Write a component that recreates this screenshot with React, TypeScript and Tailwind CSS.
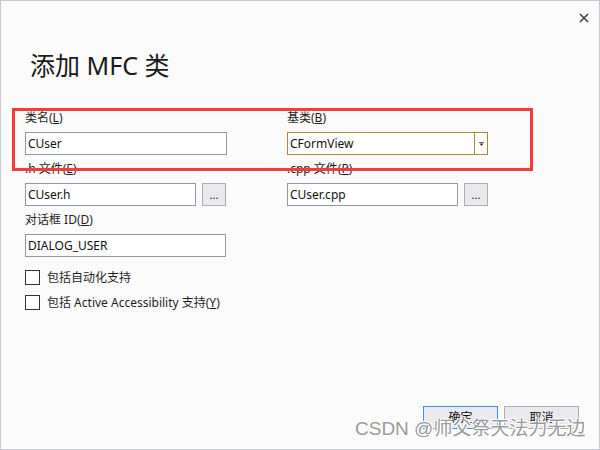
import React from 'react';

const font = { fontFamily: '"Noto Sans", "Noto Sans CJK SC", sans-serif' };

const Label = ({ children }: { children: React.ReactNode }) => (
  <div className="h-[16px] text-[12px] leading-[16px] text-[#1e1e1e]">{children}</div>
);

const TextBox = ({ value, w }: { value: string; w: string }) => (
  <div className={`${w} mt-[6px] h-[23px] border border-[#8e9aac] bg-white px-[2px] text-[12px] leading-[21px] text-[#111]`}>
    {value}
  </div>
);

const Browse = () => (
  <div className="mt-[6px] ml-[6px] flex h-[23px] w-[24px] items-center justify-center border border-[#adadad] bg-[#e9e9ee] text-[11px] leading-none text-[#111]">
    ...
  </div>
);

const Check = ({ children }: { children: React.ReactNode }) => (
  <div className="flex h-[25px] items-center gap-[7px]">
    <div className="h-[15px] w-[15px] border border-[#333] bg-white" />
    <span className="text-[12px] text-[#1e1e1e]">{children}</span>
  </div>
);

export default function App() {
  return (
    <div style={font} className="relative flex h-[450px] w-[600px] flex-col overflow-hidden border border-[#c9cad9] bg-[#fbfbfb]">
      <div className="flex h-[33px] items-center justify-end pr-[10px]">
        <svg width="10" height="10" viewBox="0 0 10 10">
          <path d="M1 1 L9 9 M9 1 L1 9" stroke="#444" strokeWidth="1.7" />
        </svg>
      </div>

      <div className="mt-[15px] pl-[29px] text-[25px] leading-[32px] text-[#1a1a1a]">添加 MFC 类</div>

      <div className="mt-[29px] grid grid-cols-[262px_1fr] pl-[24px]">
        <div className="flex flex-col gap-[6px]">
          <div>
            <Label>类名(<u>L</u>)</Label>
            <TextBox value="CUser" w="w-[202px]" />
          </div>
          <div>
            <Label>.h 文件(<u>E</u>)</Label>
            <div className="flex">
              <TextBox value="CUser.h" w="w-[171px]" />
              <Browse />
            </div>
          </div>
          <div>
            <Label>对话框 ID(<u>D</u>)</Label>
            <TextBox value="DIALOG_USER" w="w-[201px]" />
          </div>
        </div>

        <div className="flex flex-col gap-[6px]">
          <div>
            <Label>基类(<u>B</u>)</Label>
            <div className="mt-[6px] flex h-[23px] w-[201px] border border-[#a8883a] bg-white">
              <div className="flex-1 px-[2px] text-[12px] leading-[21px] text-[#111]">CFormView</div>
              <div className="flex w-[13px] items-center justify-center border-l border-[#a8883a]">
                <svg width="5" height="4" viewBox="0 0 5 4">
                  <path d="M0 0 H5 V0.8 H0 Z M0.5 1.5 H4.5 L2.5 4 Z" fill="#333" />
                </svg>
              </div>
            </div>
          </div>
          <div>
            <Label>.cpp 文件(<u>P</u>)</Label>
            <div className="flex">
              <TextBox value="CUser.cpp" w="w-[171px]" />
              <Browse />
            </div>
          </div>
        </div>
      </div>

      <div className="mt-[8px] flex flex-col pl-[24px]">
        <Check>包括自动化支持</Check>
        <Check>
          包括 Active Accessibility 支持(<u>Y</u>)
        </Check>
      </div>

      <div className="mt-auto flex justify-end gap-[6px] pr-[20px] pb-[20px]">
        <div className="flex h-[23px] w-[75px] items-center justify-center border border-[#3d8ee6] bg-[#e9e9ee] text-[12px] text-[#111]">
          确定
        </div>
        <div className="flex h-[23px] w-[75px] items-center justify-center border border-[#adadad] bg-[#e9e9ee] text-[12px] text-[#111]">
          取消
        </div>
      </div>

      <div className="absolute left-[11px] top-[107px] h-[63px] w-[521px] border-[3px] border-[#f53b3b]" />

      <div
        className="absolute left-[354px] top-[415px] text-[19px] leading-[26px] text-[#9a9a9a]"
        style={{ fontFamily: '"Liberation Sans", "Noto Sans CJK SC", sans-serif', textShadow: '1px 1px 0 #fff, -1px -1px 0 #fff, 1px -1px 0 #fff, -1px 1px 0 #fff' }}
      >
        CSDN @师父祭天法力无边
      </div>
    </div>
  );
}
